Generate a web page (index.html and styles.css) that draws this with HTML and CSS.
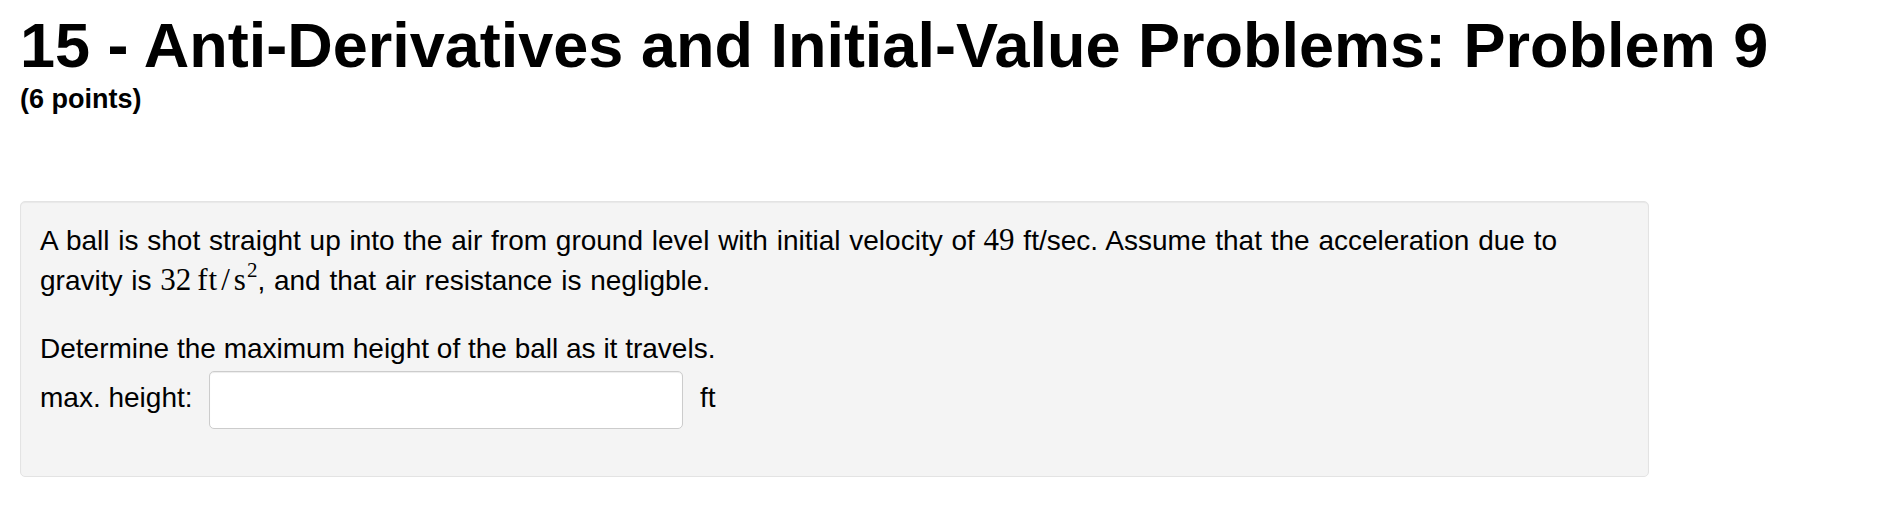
FILE: index.html
```html
<!DOCTYPE html>
<html lang="en">
<head>
<meta charset="utf-8">
<title>15 - Anti-Derivatives and Initial-Value Problems: Problem 9</title>
<link rel="stylesheet" href="styles.css">
</head>
<body>
<main class="page">
  <header class="problem-header">
    <h1 class="problem-title">15 - Anti-Derivatives and Initial-Value Problems: Problem 9</h1>
    <div class="problem-points">(6 points)</div>
  </header>
  <section class="problem-body">
    <p class="para para-lead">A ball is shot straight up into the air from ground level with initial velocity of <span class="math">49</span> ft/sec. Assume that the acceleration due to gravity is <span class="math">32<span class="thin"></span><span class="unit">ft</span><span class="slash">/</span>s<sup class="sup">2</sup></span>, and that air resistance is negligble.</p>
    <p class="para para-question">Determine the maximum height of the ball as it travels.</p>
    <div class="answer-row">max. height: <input class="answer-input" type="text" aria-label="max. height"> ft</div>
  </section>
</main>
</body>
</html>
```
FILE: styles.css
```css
html, body {
  margin: 0;
  padding: 0;
  background: #ffffff;
}
body {
  font-family: "Liberation Sans", Arial, Helvetica, sans-serif;
  color: #000000;
}
.page {
  padding: 9px 0 0 20px;
}
.problem-title {
  margin: 0;
  font-size: 63px;
  line-height: 72px;
  font-weight: 700;
  white-space: nowrap;
}
.problem-points {
  margin-top: 3px;
  font-size: 27px;
  line-height: 30px;
  font-weight: 700;
}
.problem-body {
  width: 1629px;
  margin-top: 87px;
  box-sizing: border-box;
  background: #f4f4f4;
  border: 1px solid #e3e3e3;
  border-radius: 5px;
  box-shadow: inset 0 1px 1px rgba(0, 0, 0, 0.05);
  padding: 19px;
  font-size: 28px;
  line-height: 40px;
}
.para {
  margin: 0;
}
.para-lead {
  word-spacing: 1px;
}
.para-question {
  margin-top: 28px;
}
.math {
  font-family: "Liberation Serif", "Times New Roman", serif;
  font-size: 31px;
  line-height: 1;
  word-spacing: 0;
}
.thin {
  display: inline-block;
  width: 6px;
}
.unit {
  letter-spacing: 1px;
}
.slash {
  margin: 0 4px 0 3px;
}
.sup {
  margin-left: 1px;
  font-size: 21px;
  line-height: 0;
  vertical-align: 13px;
}
.answer-row {
  margin-top: 2px;
  margin-bottom: 28px;
}
.answer-input {
  box-sizing: border-box;
  width: 474px;
  height: 58px;
  margin: 0 9px 0 9px;
  vertical-align: middle;
  background: #ffffff;
  border: 1px solid #cccccc;
  border-radius: 5px;
  box-shadow: inset 0 1px 1px rgba(0, 0, 0, 0.075);
  font-size: 28px;
}
```
